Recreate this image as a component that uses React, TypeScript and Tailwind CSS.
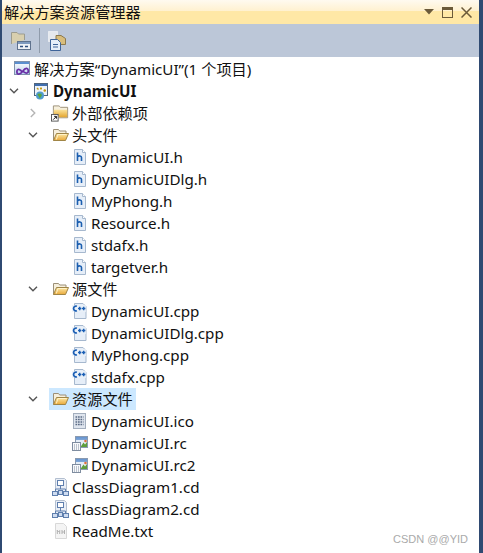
import React from "react";

const FolderOpen = () => (
  <svg width="18" height="16" viewBox="0 0 18 16">
    <defs>
      <linearGradient id="fo" x1="0" y1="0" x2="0" y2="1">
        <stop offset="0" stopColor="#fde9a8" />
        <stop offset="1" stopColor="#e9a93a" />
      </linearGradient>
    </defs>
    <path d="M1.500 13.500V2.500h5l1.200 1.500h6.300v2" fill="#f6efdc" stroke="#9c9078" />
    <path d="M1.500 13.500L4.500 6.500h12l-3 7z" fill="url(#fo)" stroke="#a08546" />
    <path d="M4.300 12.500L6 7.500h8.500" fill="none" stroke="#fff3c8" />
  </svg>
);
const FolderRef = () => (
  <svg width="20" height="19" viewBox="0 0 20 19">
    <defs>
      <linearGradient id="fc" x1="0" y1="0" x2="0" y2="1">
        <stop offset="0" stopColor="#fbe39a" />
        <stop offset="1" stopColor="#e3a52f" />
      </linearGradient>
    </defs>
    <path d="M2.500 12V1.500h6l1.500 1.500h7.500v11H8" fill="#f6efdc" stroke="#9c9078" />
    <path d="M3 5.500h14v8H8v-1.500H3z" fill="url(#fc)" />
    <rect x="0.500" y="10.500" width="7" height="7" fill="#fff" stroke="#555" />
    <path d="M2.300 16L5.500 12.800M3.300 12.500H5.700V15" fill="none" stroke="#111" />
  </svg>
);
const HFile = () => (
  <svg width="14" height="16" viewBox="0 0 14 16">
    <path d="M1.500.5h8l3 3v12h-11z" fill="#e6eef8" stroke="#a6b8ce" />
    <path d="M9.500.5v3h3" fill="#fff" stroke="#a6b8ce" />
    <path d="M4.500 3.500v8.500M4.500 7.800c1.300-1.300 4-1.300 4 .8V12" fill="none" stroke="#1c5fb0" strokeWidth="1.600" />
  </svg>
);
const CppFile = () => (
  <svg width="15" height="16" viewBox="0 0 15 16">
    <path d="M2.500.5h8.500l3 3v12H2.500z" fill="#e6eef8" stroke="#a6b8ce" />
    <rect x="0" y="2" width="14" height="7" fill="#eaf0f8" opacity="0.8" />
    <path d="M4.900 3.300A2.400 2.400 0 1 0 4.900 7.700" fill="none" stroke="#1b5fb5" strokeWidth="1.700" />
    <path d="M6 5.500h3.400M7.700 3.800v3.400M10 5.500h3.400M11.700 3.800v3.400" stroke="#1b5fb5" strokeWidth="1.400" />
  </svg>
);
const IcoFile = () => (
  <svg width="15" height="16" viewBox="0 0 15 16">
    <rect x="1.500" y="0.500" width="12" height="15" fill="#dfe5ee" stroke="#a3aebd" />
    <path d="M3.500 4h8M3.500 6.500h8M3.500 9h8M3.500 11.500h8" stroke="#5b6b85" strokeWidth="1.600" strokeDasharray="1.700 .8" />
  </svg>
);
const RcFile = () => (
  <svg width="16" height="15" viewBox="0 0 16 15">
    <defs>
      <linearGradient id="rc" x1="0" y1="0" x2="0" y2="1">
        <stop offset="0" stopColor="#5f8fcc" />
        <stop offset="0.3" stopColor="#7fa6d8" />
        <stop offset="0.31" stopColor="#e4edf7" />
        <stop offset="1" stopColor="#e4edf7" />
      </linearGradient>
    </defs>
    <rect x="3.500" y="0.500" width="12" height="11" fill="url(#rc)" stroke="#8a9ab0" />
    <path d="M8.500 11l3-4.500 1.500 2 2-2.500v5z" fill="#5f9e3c" />
    <circle cx="13.500" cy="5" r="1.300" fill="#e0703a" />
    <rect x="0.500" y="6.500" width="8" height="8" fill="#f8f9fb" stroke="#7f8da0" />
    <path d="M2 9h5M2 11h5M2 13h5" stroke="#7f8da0" strokeDasharray="1 1" />
  </svg>
);
const CdFile = () => (
  <svg width="17" height="18" viewBox="0 0 17 18">
    <path d="M3.500 .5h9l2 2v13h-11z" fill="#e9eef6" stroke="#b3bfd0" />
    <rect x="5.500" y="2.500" width="6" height="5" fill="#fff" stroke="#5f7fae" />
    <path d="M8.500 7.500v3.500M3.500 14v-3h10v3" fill="none" stroke="#5f7fae" />
    <rect x="0.500" y="13.500" width="5" height="4" fill="#cfdcf0" stroke="#5f7fae" />
    <rect x="6.500" y="12.500" width="4" height="4" fill="#cfdcf0" stroke="#5f7fae" />
    <rect x="11.500" y="13.500" width="5" height="4" fill="#cfdcf0" stroke="#5f7fae" />
  </svg>
);
const TxtFile = () => (
  <svg width="14" height="16" viewBox="0 0 14 16">
    <path d="M1.500.5h8l3 3v12h-11z" fill="#f4f4f4" stroke="#d8d8d8" />
    <path d="M3.300 7v4M3.300 7.500l1.200 1.500 1.200-1.500V11M8 7v4M10.500 7v4M8 9h2.500" fill="none" stroke="#b0b0b0" />
  </svg>
);
const SlnIcon = () => (
  <svg width="17" height="16" viewBox="0 0 17 16">
    <defs>
      <linearGradient id="sl" x1="0" y1="0" x2="0" y2="1">
        <stop offset="0" stopColor="#ffffff" />
        <stop offset="1" stopColor="#b9d2ee" />
      </linearGradient>
    </defs>
    <rect x="0.500" y="0.500" width="15" height="13" fill="url(#sl)" stroke="#7f91ab" />
    <rect x="1" y="1" width="14" height="2" fill="#5a8fd0" />
    <path d="M8.500 11.500c-1.500-2.500-3-3.500-4.500-3s-1.500 4 0 4.500 3-.5 4.500-2.500 3-3.500 4.500-3 2 4 0 4.500-3-.5-4.500-2.500" fill="none" stroke="#6a2fa5" strokeWidth="1.800" />
  </svg>
);
const ProjectIcon = () => (
  <svg width="16" height="17" viewBox="0 0 16 17">
    <rect x="1.500" y="0.500" width="13" height="12" fill="#eef3f9" stroke="#50657f" />
    <rect x="2" y="1" width="12" height="2" fill="#3f6eae" />
    <path d="M7 5.500h2M8 4.500v2M10.500 7.500h2.500M11.700 6.300v2.500M4 5l1.500 1.500" stroke="#c39a14" strokeWidth="1.400" />
    <circle cx="7" cy="12.500" r="4" fill="#4f9bd0" />
    <path d="M4.300 11.500c2-2 3 0 4-1l.5 2-2 3-1-2z" fill="#5aa63f" />
  </svg>
);

const Row = ({ indent, chev, chevGap, icon, gap = "ml-[2px]", bold, selected, children }: { indent: string; chev?: "open" | "closed"; chevGap?: string; icon: React.ReactNode; gap?: string; bold?: boolean; selected?: boolean; children: React.ReactNode }) => (
  <div className={`flex h-[22px] items-center ${indent}`}>
    {chev !== undefined && (
      <span className={`flex w-[19px] shrink-0 items-center justify-center ${chevGap ?? ""}`}>
        {chev === "open" ? (
          <svg width="10" height="6" viewBox="0 0 10 6"><path d="M1 .8l4 4 4-4" fill="none" stroke="#555" strokeWidth="1.400" /></svg>
        ) : (
          <svg width="6" height="10" viewBox="0 0 6 10"><path d="M.8 1l4 4-4 4" fill="none" stroke="#b5b5b5" strokeWidth="1.400" /></svg>
        )}
      </span>
    )}
    <div className={`flex h-[22px] items-center ${selected ? "bg-[#cce8ff]" : ""} pr-[3px] pl-[2px]`}>
      <span className="flex w-[19px] shrink-0 items-center justify-center">{icon}</span>
      <span className={`${gap} whitespace-nowrap text-[15.2px] leading-[22px] text-[#111] ${bold ? "font-bold" : ""}`}>{children}</span>
    </div>
  </div>
);

const files = {
  h: ["DynamicUI.h", "DynamicUIDlg.h", "MyPhong.h", "Resource.h", "stdafx.h", "targetver.h"],
  cpp: ["DynamicUI.cpp", "DynamicUIDlg.cpp", "MyPhong.cpp", "stdafx.cpp"],
};

export default function App() {
  return (
    <div className="relative flex h-[553px] w-[483px] flex-col overflow-hidden border-l-2 border-r-4 border-[#2f4a72] bg-white font-['Noto_Sans','Noto_Sans_CJK_SC',sans-serif]">
      <div className="-ml-[2px] flex h-[24px] shrink-0 items-center bg-[linear-gradient(#fffaf0_0%,#fff1d0_45%,#ffe8a6_48%,#ffe8a6_100%)] pl-[4px] pr-[7px]">
        <span className="flex-1 text-[15.2px] leading-[24px] text-[#111]">解决方案资源管理器</span>
        <svg width="10" height="6" viewBox="0 0 10 6" className="mr-[8px]"><path d="M0 0h10L5 5.500z" fill="#6b5a3a" /></svg>
        <svg width="11" height="11" viewBox="0 0 11 11" className="mr-[8px]"><rect x="0.500" y="0.500" width="10" height="10" fill="none" stroke="#6b5a3a" /><rect x="1" y="1" width="9" height="2" fill="#6b5a3a" /></svg>
        <svg width="11" height="11" viewBox="0 0 11 11"><path d="M.5.500l10 10M10.500.500l-10 10" stroke="#6b5a3a" strokeWidth="1.500" /></svg>
      </div>
      <div className="flex h-[33px] shrink-0 items-center bg-[#bcc7d8] pl-[9px]">
        <svg width="21" height="21" viewBox="0 0 21 21">
          <path d="M.5 14V2.500h5.500l1.500 1.500h6v6" fill="#d8cfae" stroke="#9c9c90" />
          <rect x="6.500" y="11.500" width="13" height="8" fill="#eef1f6" stroke="#5f728d" />
          <rect x="7" y="12" width="12" height="2" fill="#7e9abf" />
          <path d="M9 16.500h3M14 16.500h3" stroke="#2f4f80" strokeWidth="1.500" />
        </svg>
        <div className="mx-[7px] h-[25px] w-px bg-[#8f9bab]" />
        <svg width="21" height="22" viewBox="0 0 21 22">
          <rect x="1.500" y="1.500" width="9" height="10" fill="#e6e9ee" stroke="#fff" strokeDasharray="1 1" />
          <path d="M9 5.500h5l4.500 3v6H9z" fill="#d8bd7c" stroke="#8d7a4e" />
          <path d="M3.500 9.500h7l3 3v8h-10z" fill="#e6eef8" stroke="#3f6499" />
          <path d="M6 14.500h5M6 17h5" stroke="#3f6499" strokeWidth="1.200" />
        </svg>
      </div>
      <div className="flex flex-col pt-[1px]">
        <Row indent="pl-[9px]" icon={<SlnIcon />} gap="ml-[2px]">解决方案“DynamicUI”(1 个项目)</Row>
        <Row indent="pl-[2px]" chev="open" chevGap="mr-[6px]" icon={<ProjectIcon />} gap="ml-[3px]" bold>DynamicUI</Row>
        <Row indent="pl-[21px]" chev="closed" chevGap="mr-[7px]" icon={<FolderRef />}>外部依赖项</Row>
        <Row indent="pl-[21px]" chev="open" chevGap="mr-[7px]" icon={<FolderOpen />}>头文件</Row>
        {files.h.map((f) => (
          <Row key={f} indent="pl-[66px]" icon={<HFile />}>{f}</Row>
        ))}
        <Row indent="pl-[21px]" chev="open" chevGap="mr-[7px]" icon={<FolderOpen />}>源文件</Row>
        {files.cpp.map((f) => (
          <Row key={f} indent="pl-[66px]" icon={<CppFile />}>{f}</Row>
        ))}
        <Row indent="pl-[21px]" chev="open" chevGap="mr-[7px]" icon={<FolderOpen />} selected>资源文件</Row>
        <Row indent="pl-[66px]" icon={<IcoFile />}>DynamicUI.ico</Row>
        <Row indent="pl-[66px]" icon={<RcFile />}>DynamicUI.rc</Row>
        <Row indent="pl-[66px]" icon={<RcFile />}>DynamicUI.rc2</Row>
        <Row indent="pl-[47px]" icon={<CdFile />}>ClassDiagram1.cd</Row>
        <Row indent="pl-[47px]" icon={<CdFile />}>ClassDiagram2.cd</Row>
        <Row indent="pl-[47px]" icon={<TxtFile />}>ReadMe.txt</Row>
      </div>
      <div className="absolute bottom-[7px] right-[11px] font-['Liberation_Sans',sans-serif] text-[11px] leading-[14px] text-[#aaa]">CSDN @@YID</div>
    </div>
  );
}
